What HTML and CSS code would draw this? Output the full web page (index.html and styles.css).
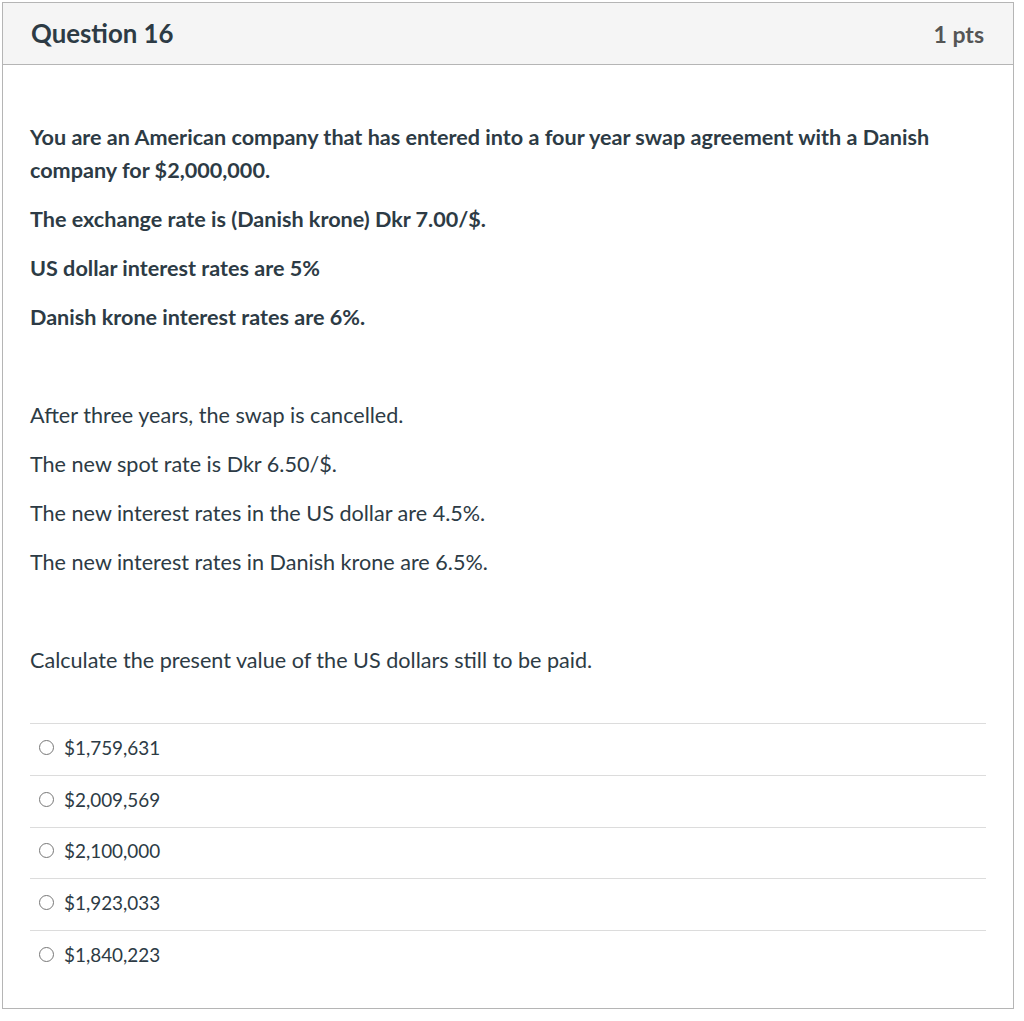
FILE: index.html
```html
<!DOCTYPE html>
<html>
<head>
<meta charset="utf-8">
<link rel="stylesheet" href="styles.css">
</head>
<body>
<div class="page">
  <div class="question">
    <div class="header">
      <h2 class="title">Question 16</h2>
      <div class="points">1 pts</div>
    </div>
    <div class="content">
      <div class="text">
        <p class="strong">You are an American company that has entered into a four year swap agreement with a Danish company for $2,000,000.</p>
        <p class="strong">The exchange rate is (Danish krone) Dkr 7.00/$.</p>
        <p class="strong">US dollar interest rates are 5%</p>
        <p class="strong">Danish krone interest rates are 6%.</p>
        <p>&nbsp;</p>
        <p>After three years, the swap is cancelled.</p>
        <p>The new spot rate is Dkr 6.50/$.</p>
        <p>The new interest rates in the US dollar are 4.5%.</p>
        <p>The new interest rates in Danish krone are 6.5%.</p>
        <p>&nbsp;</p>
        <p>Calculate the present value of the US dollars still to be paid.</p>
      </div>
      <div class="answers">
        <label class="answer"><span class="radio"></span><span>$1,759,631</span></label>
        <label class="answer"><span class="radio"></span><span>$2,009,569</span></label>
        <label class="answer"><span class="radio"></span><span>$2,100,000</span></label>
        <label class="answer"><span class="radio"></span><span>$1,923,033</span></label>
        <label class="answer"><span class="radio"></span><span>$1,840,223</span></label>
      </div>
    </div>
  </div>
</div>
</body>
</html>
```
FILE: styles.css
```css
* { box-sizing: border-box; }
html, body { margin: 0; padding: 0; background: #fff; }
body { font-family: Lato, "Open Sans", sans-serif; color: #2d3b45; }
.page { padding: 2px 10px 0 2px; }
.question {
  width: 1012px;
  height: 1007px;
  border: 1px solid #b5b5b5;
  display: flex;
  flex-direction: column;
}
.header {
  height: 62px;
  background: #f5f5f5;
  border-bottom: 1px solid #b5b5b5;
  display: flex;
  align-items: center;
  justify-content: space-between;
  padding: 0 29px 0 28px;
}
.title {
  margin: 0 0 2px 0;
  font-size: 25.8px;
  font-weight: 700;
  color: #2d3b45;
}
.points {
  font-size: 23px;
  font-weight: 700;
  color: #555;
}
.content { padding: 56px 27px 0 27px; }
.text p {
  margin: 0 0 16px 0;
  font-size: 21.6px;
  line-height: 33px;
}
.text p.strong { font-weight: 700; }
.answers { margin-top: 46px; }
.answer {
  display: flex;
  align-items: center;
  height: 51.75px;
  border-top: 1px solid #dcdcdc;
  padding: 0 0 4px 9px;
  font-size: 18.9px;
}
.radio {
  width: 15px;
  height: 15px;
  border: 1px solid #777;
  border-radius: 50%;
  margin-right: 10px;
  flex: none;
}
```
